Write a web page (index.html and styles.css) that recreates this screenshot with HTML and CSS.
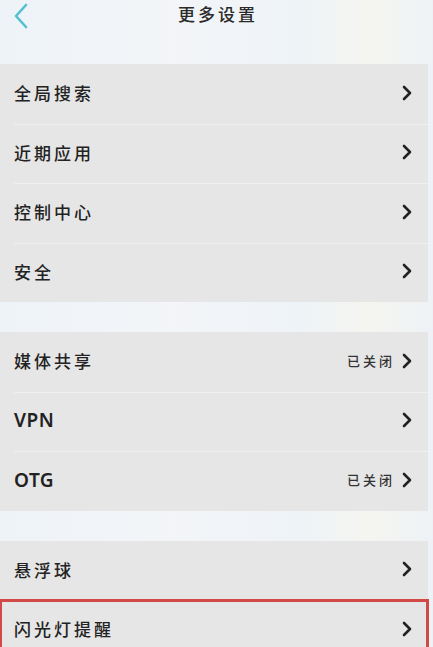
FILE: index.html
```html
<!DOCTYPE html>
<html lang="zh">
<head>
<meta charset="utf-8">
<link rel="stylesheet" href="styles.css">
</head>
<body>
<div class="page">
  <header class="header">
    <svg class="back" viewBox="0 0 16 26" width="16" height="26"><path d="M13 2 L3 13 L13 24" fill="none" stroke="#4ec3cf" stroke-width="2.6" stroke-linecap="round" stroke-linejoin="round"/></svg>
    <div class="title">更多设置</div>
  </header>
  <section class="group">
    <div class="row"><span class="label">全局搜索</span><span class="right"><svg class="chev" viewBox="0 0 10 16" width="10" height="16"><path d="M2 2 L8 8 L2 14" fill="none" stroke="#222" stroke-width="2.6" stroke-linecap="round" stroke-linejoin="round"/></svg></span></div>
    <div class="row"><span class="label">近期应用</span><span class="right"><svg class="chev" viewBox="0 0 10 16" width="10" height="16"><path d="M2 2 L8 8 L2 14" fill="none" stroke="#222" stroke-width="2.6" stroke-linecap="round" stroke-linejoin="round"/></svg></span></div>
    <div class="row"><span class="label">控制中心</span><span class="right"><svg class="chev" viewBox="0 0 10 16" width="10" height="16"><path d="M2 2 L8 8 L2 14" fill="none" stroke="#222" stroke-width="2.6" stroke-linecap="round" stroke-linejoin="round"/></svg></span></div>
    <div class="row"><span class="label">安全</span><span class="right"><svg class="chev" viewBox="0 0 10 16" width="10" height="16"><path d="M2 2 L8 8 L2 14" fill="none" stroke="#222" stroke-width="2.6" stroke-linecap="round" stroke-linejoin="round"/></svg></span></div>
  </section>
  <section class="group">
    <div class="row"><span class="label">媒体共享</span><span class="right"><span class="status">已关闭</span><svg class="chev" viewBox="0 0 10 16" width="10" height="16"><path d="M2 2 L8 8 L2 14" fill="none" stroke="#222" stroke-width="2.6" stroke-linecap="round" stroke-linejoin="round"/></svg></span></div>
    <div class="row"><span class="label latin">VPN</span><span class="right"><svg class="chev" viewBox="0 0 10 16" width="10" height="16"><path d="M2 2 L8 8 L2 14" fill="none" stroke="#222" stroke-width="2.6" stroke-linecap="round" stroke-linejoin="round"/></svg></span></div>
    <div class="row"><span class="label latin">OTG</span><span class="right"><span class="status">已关闭</span><svg class="chev" viewBox="0 0 10 16" width="10" height="16"><path d="M2 2 L8 8 L2 14" fill="none" stroke="#222" stroke-width="2.6" stroke-linecap="round" stroke-linejoin="round"/></svg></span></div>
  </section>
  <section class="group">
    <div class="row"><span class="label">悬浮球</span><span class="right"><svg class="chev" viewBox="0 0 10 16" width="10" height="16"><path d="M2 2 L8 8 L2 14" fill="none" stroke="#222" stroke-width="2.6" stroke-linecap="round" stroke-linejoin="round"/></svg></span></div>
    <div class="row highlighted"><span class="label">闪光灯提醒</span><span class="right"><svg class="chev" viewBox="0 0 10 16" width="10" height="16"><path d="M2 2 L8 8 L2 14" fill="none" stroke="#222" stroke-width="2.6" stroke-linecap="round" stroke-linejoin="round"/></svg></span></div>
  </section>
</div>
</body>
</html>
```
FILE: styles.css
```css
html, body {
  margin: 0;
  padding: 0;
}
body {
  width: 433px;
  height: 647px;
  overflow: hidden;
  background: #eef2f6;
  font-family: "Noto Sans CJK SC", "Noto Sans", sans-serif;
  color: #222;
}
.page {
  display: flex;
  flex-direction: column;
  gap: 30px;
  background: linear-gradient(90deg, #eef3f8 0%, #f3f5f8 40%, #eef3f7 70%, #f5f5f0 85%, #eef2f6 100%);
}
.header {
  height: 34px;
  display: flex;
  align-items: center;
  justify-content: center;
  position: relative;
}
.back {
  position: absolute;
  left: 13px;
  top: 3px;
}
.title {
  font-size: 17px;
  font-weight: 500;
  letter-spacing: 3px;
  margin-right: -3px;
  color: #2a2a2a;
  margin-top: -7px;
}
.group {
  background: #e6e6e6;
  display: flex;
  flex-direction: column;
  margin-right: 5px;
}
.row {
  height: 59.5px;
  display: flex;
  align-items: center;
  justify-content: space-between;
  padding: 0 16px 2px 14px;
  box-sizing: border-box;
  position: relative;
}
.row + .row::before {
  content: "";
  position: absolute;
  left: 14px;
  right: 0;
  top: 0;
  height: 1px;
  background: #efefef;
}
.label {
  font-size: 17px;
  font-weight: 500;
  letter-spacing: 3px;
  color: #222;
}
.label.latin {
  font-family: "Noto Sans", "Open Sans", sans-serif;
  font-weight: 600;
  letter-spacing: 0.5px;
  font-size: 19px;
}
.right {
  display: flex;
  align-items: center;
  gap: 7px;
}
.status {
  font-size: 13px;
  font-weight: 500;
  letter-spacing: 3px;
  color: #333;
}
.chev {
  display: block;
}
.highlighted {
  outline: 3px solid #d24a46;
  outline-offset: -2px;
}
.highlighted::before {
  display: none;
}
```
